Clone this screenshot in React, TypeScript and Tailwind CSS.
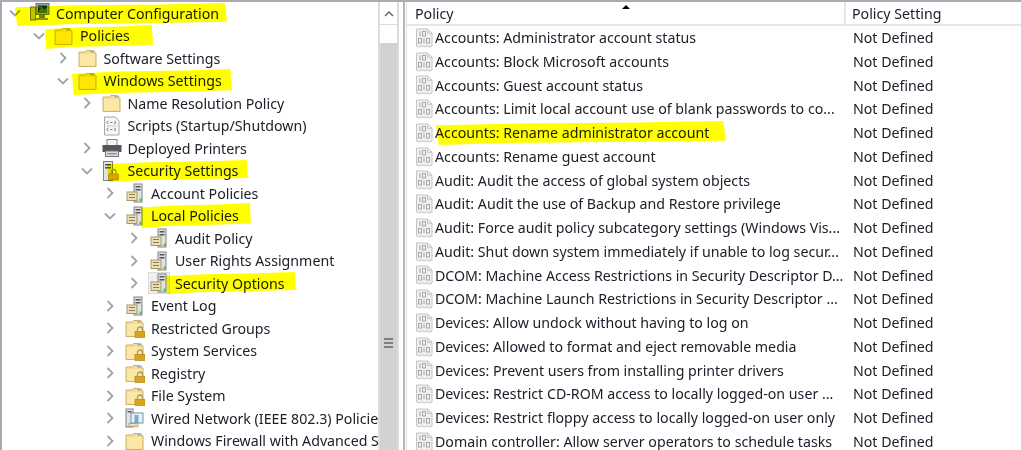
import React from 'react';

type IconName = 'computer' | 'folder' | 'script' | 'printer' | 'secure' | 'server' | 'lockfolder' | 'network';

const Chevron = ({ open }: { open: boolean }) => (
  <svg width="16" height="16" viewBox="0 0 16 16" fill="none" stroke="#a3a3a3" strokeWidth="1.8" className="shrink-0">
    {open ? <polyline points="3,5.5 8,10.5 13,5.5" /> : <polyline points="5.5,3 10.5,8 5.5,13" />}
  </svg>
);

const Lock = ({ x, y }: { x: number; y: number }) => (
  <g transform={`translate(${x} ${y})`}>
    <path d="M2.5 5V3a2.5 2.5 0 0 1 5 0V5" fill="none" stroke="#a89a6a" strokeWidth="1.3" />
    <rect x="0" y="5" width="10" height="6" fill="#d9a520" stroke="#a67c10" strokeWidth="0.6" />
  </g>
);

const Folder = () => (
  <>
    <path d="M1 4h6.5l1-1.5h6l2 .5v2H18v13.5H1z" fill="#f8dc94" stroke="#cfb06c" strokeWidth="1" />
    <rect x="2" y="6" width="15" height="11.5" fill="#fde7a6" />
    <rect x="12.5" y="3" width="3" height="1.6" fill="#7fb2dc" />
  </>
);

const Server = () => (
  <>
    <rect x="9" y="1" width="8" height="18" fill="#dfe3e6" stroke="#7d8388" strokeWidth="1" />
    <rect x="10.5" y="3" width="5" height="1.5" fill="#555" />
    <rect x="10.5" y="6" width="5" height="1.5" fill="#555" />
    <rect x="2" y="9" width="10" height="8.5" fill="#e9dfb8" stroke="#a89a68" strokeWidth="1" />
    <path d="M4 11.5h6M4 14.5h6" stroke="#8a7d50" strokeWidth="1" />
    <rect x="14.5" y="15.5" width="2.5" height="2.5" fill="#5cc24a" />
  </>
);

const TreeIcon = ({ name }: { name: IconName }) => (
  <svg width="20" height="20" viewBox="0 0 20 20" className="shrink-0">
    {name === 'computer' && (
      <>
        <rect x="6" y="0.5" width="13" height="11" fill="#9aa4aa" stroke="#6e767b" strokeWidth="1" />
        <rect x="8" y="2.5" width="9" height="7" fill="#1c2a22" />
        <path d="M8 9.5l4-6 2 3 3-2v5z" fill="#2f7d3a" />
        <rect x="8.5" y="2.5" width="3" height="3" fill="#2b5fb0" />
        <rect x="0.5" y="4" width="5" height="13" fill="#bfc4a0" stroke="#6e767b" strokeWidth="1" />
        <rect x="9" y="12" width="6" height="3" fill="#7a8186" />
        <rect x="6" y="15" width="12" height="2" fill="#8d9498" />
      </>
    )}
    {name === 'folder' && <Folder />}
    {name === 'script' && (
      <>
        <path d="M2.5 1h11l3.5 4v14H2.5z" fill="#f7f7f7" stroke="#a6a6a6" strokeWidth="1" />
        <path d="M6.5 5l-2 1.5 2 1.5M12 5l2 1.5-2 1.5M8 6.5h2.5M6.5 12l-2 1.5 2 1.5M12 12l2 1.5-2 1.5M8 13.5h2.5" fill="none" stroke="#777" strokeWidth="0.9" />
        <path d="M4.5 10h10" stroke="#c4c4c4" strokeWidth="1" />
      </>
    )}
    {name === 'printer' && (
      <>
        <rect x="5" y="1.5" width="10" height="6" fill="#f4f4f4" stroke="#888" strokeWidth="1" />
        <rect x="0.5" y="7" width="19" height="7" fill="#53575b" />
        <rect x="3.5" y="13" width="13" height="5.5" fill="#dcdcdc" stroke="#777" strokeWidth="1" />
        <rect x="5.5" y="15" width="9" height="1.5" fill="#6aa0c8" />
      </>
    )}
    {name === 'secure' && (
      <>
        <rect x="1.5" y="0.5" width="9" height="19" fill="#dfe3e6" stroke="#7d8388" strokeWidth="1" />
        <rect x="3" y="3" width="6" height="1.5" fill="#555" />
        <rect x="3" y="6" width="6" height="1.5" fill="#555" />
        <Lock x={6.5} y={8} />
      </>
    )}
    {name === 'server' && <Server />}
    {name === 'lockfolder' && (
      <>
        <Folder />
        <Lock x={10} y={8.5} />
      </>
    )}
    {name === 'network' && (
      <>
        <rect x="1" y="1" width="7" height="18" fill="#dfe3e6" stroke="#7d8388" strokeWidth="1" />
        <rect x="2.5" y="3" width="4" height="1.5" fill="#555" />
        <rect x="6" y="5" width="12" height="10" fill="#e8f1f8" stroke="#6f93b3" strokeWidth="1" />
        <rect x="9.5" y="7" width="4" height="8" fill="#7fa9cc" />
        <rect x="4" y="15.5" width="9" height="3" fill="#e9dfb8" stroke="#a89a68" strokeWidth="0.8" />
      </>
    )}
  </svg>
);

const PolicyIcon = () => (
  <svg width="19" height="20" viewBox="0 0 19 20" className="shrink-0">
    <path d="M1.5 1h11l4.500 4v13l-2.500 1-2.500-1-2.500 1-2.500-1-2.500 1-3-1z" fill="#f0f0f0" stroke="#c4c4c4" strokeWidth="1" />
    <path d="M12.500 1v4.500h4.500" fill="#e2e2e2" stroke="#c4c4c4" strokeWidth="0.8" />
    <path d="M5 3.500v4.500" stroke="#a8a8a8" strokeWidth="1.100" />
    <rect x="7.500" y="3.500" width="3" height="4.500" fill="none" stroke="#a8a8a8" strokeWidth="1" />
    <rect x="3.500" y="10.500" width="3" height="4.500" fill="none" stroke="#a8a8a8" strokeWidth="1" />
    <path d="M9 10.500V15" stroke="#a8a8a8" strokeWidth="1.100" />
    <rect x="11.500" y="10.500" width="3" height="4.500" fill="none" stroke="#a8a8a8" strokeWidth="1" />
  </svg>
);

// freehand marker stroke, sits on top of the row and multiplies with the text
const Marker = ({ className }: { className: string }) => (
  <svg viewBox="0 0 100 100" preserveAspectRatio="none" className={`absolute mix-blend-multiply pointer-events-none ${className}`}>
    <path d="M0 18 L30 10 L70 6 L99 0 L100 82 L60 88 L25 92 L1 100 Z" fill="#ffff00" />
  </svg>
);

const levels = ['pl-[7px]', 'pl-[31px]', 'pl-[54.5px]', 'pl-[78.5px]', 'pl-[102px]', 'pl-[126px]'];

const tree: { label: string; level: number; icon: IconName; open?: boolean; leaf?: boolean; selected?: boolean; marker?: string }[] = [
  { label: 'Computer Configuration', level: 0, icon: 'computer', open: true, marker: 'left-[15px] w-[212px] top-[1px] h-[23px]' },
  { label: 'Policies', level: 1, icon: 'folder', open: true, marker: 'left-[45px] w-[108px] top-0 h-[24px]' },
  { label: 'Software Settings', level: 2, icon: 'folder' },
  { label: 'Windows Settings', level: 2, icon: 'folder', open: true, marker: 'left-[72px] w-[160px] -top-[1px] h-[26px]' },
  { label: 'Name Resolution Policy', level: 3, icon: 'folder' },
  { label: 'Scripts (Startup/Shutdown)', level: 3, icon: 'script', leaf: true },
  { label: 'Deployed Printers', level: 3, icon: 'printer' },
  { label: 'Security Settings', level: 3, icon: 'secure', open: true, marker: 'left-[107px] w-[141px] top-0 h-[22px]' },
  { label: 'Account Policies', level: 4, icon: 'server' },
  { label: 'Local Policies', level: 4, icon: 'server', open: true, marker: 'left-[141px] w-[110px] -top-[2px] h-[25px]' },
  { label: 'Audit Policy', level: 5, icon: 'server' },
  { label: 'User Rights Assignment', level: 5, icon: 'server' },
  { label: 'Security Options', level: 5, icon: 'server', selected: true, marker: 'left-[166px] w-[130px] top-0 h-[22px]' },
  { label: 'Event Log', level: 4, icon: 'server' },
  { label: 'Restricted Groups', level: 4, icon: 'lockfolder' },
  { label: 'System Services', level: 4, icon: 'lockfolder' },
  { label: 'Registry', level: 4, icon: 'lockfolder' },
  { label: 'File System', level: 4, icon: 'lockfolder' },
  { label: 'Wired Network (IEEE 802.3) Policies', level: 4, icon: 'network' },
  { label: 'Windows Firewall with Advanced Security', level: 4, icon: 'folder' },
];

const policies = [
  'Accounts: Administrator account status',
  'Accounts: Block Microsoft accounts',
  'Accounts: Guest account status',
  'Accounts: Limit local account use of blank passwords to co...',
  'Accounts: Rename administrator account',
  'Accounts: Rename guest account',
  'Audit: Audit the access of global system objects',
  'Audit: Audit the use of Backup and Restore privilege',
  'Audit: Force audit policy subcategory settings (Windows Vis...',
  'Audit: Shut down system immediately if unable to log secur...',
  'DCOM: Machine Access Restrictions in Security Descriptor D...',
  'DCOM: Machine Launch Restrictions in Security Descriptor ...',
  'Devices: Allow undock without having to log on',
  'Devices: Allowed to format and eject removable media',
  'Devices: Prevent users from installing printer drivers',
  'Devices: Restrict CD-ROM access to locally logged-on user ...',
  'Devices: Restrict floppy access to locally logged-on user only',
  'Domain controller: Allow server operators to schedule tasks',
];

export default function App() {
  return (
    <div className="relative w-[1021px] h-[450px] overflow-hidden bg-white flex flex-col font-['Noto_Sans',sans-serif] text-[14.2px] text-[#20202c]">
      <div className="h-[2px] bg-[#a9aab3] shrink-0" />
      <div className="flex flex-1 min-h-0">
        {/* Tree */}
        <div className="w-[378px] shrink-0 border-l-2 border-[#a9aab3] overflow-hidden">
          <div className="-ml-[2px]">
            {tree.map((n) => (
              <div key={n.label} className={`relative flex items-center h-[22.5px] whitespace-nowrap ${levels[n.level]}`}>
                {n.leaf ? <div className="w-4 shrink-0" /> : <Chevron open={!!n.open} />}
                <div className={`ml-[7px] w-[20px] shrink-0 flex ${n.selected ? 'outline outline-[#dcdcdc] bg-[#efefef]' : ''}`}>
                  <TreeIcon name={n.icon} />
                </div>
                <span className="ml-[6px]">{n.label}</span>
                {n.marker && <Marker className={n.marker} />}
              </div>
            ))}
          </div>
        </div>

        {/* Tree scrollbar */}
        <div className="w-[21px] shrink-0 flex flex-col border-x-2 border-[#dcdcdc]">
          <div className="h-[22px] flex items-center justify-center mt-[1px] border-b border-[#dcdcdc]">
            <svg width="10" height="6" viewBox="0 0 10 6" fill="none" stroke="#606060" strokeWidth="1.4">
              <polyline points="1,5 5,1 9,5" />
            </svg>
          </div>
          <div className="h-[18px] bg-white" />
          <div className="flex-1 bg-[#d2d2d2] flex flex-col items-center pt-[295px] gap-[2px]">
            <div className="w-[9px] h-[2px] bg-[#7f7f7f]" />
            <div className="w-[9px] h-[2px] bg-[#7f7f7f]" />
            <div className="w-[9px] h-[2px] bg-[#7f7f7f]" />
          </div>
        </div>

        {/* Splitter */}
        <div className="w-[7px] shrink-0 flex">
          <div className="w-[4px] bg-white" />
          <div className="w-[2px] bg-[#b5b5bb]" />
        </div>

        {/* Policy list */}
        <div className="flex-1 min-w-0 border-l border-[#e0e0e0]">
          <div className="relative flex h-[24px] border-b-2 border-[#e6e6e6]">
            <div className="w-[439px] pl-[8px] pt-[2px] flex items-center border-r-2 border-[#e6e6e6]">Policy</div>
            <div className="pl-[6px] pt-[2px] flex items-center">Policy Setting</div>
            <div className="absolute left-[215px] top-[3px] w-0 h-0 border-x-[4px] border-x-transparent border-b-[4px] border-b-black" />
          </div>
          {policies.map((p) => (
            <div key={p} className="relative flex items-center h-[23.75px] whitespace-nowrap">
              <div className="w-[441px] pl-[8px] flex items-center">
                <PolicyIcon />
                <span className="ml-[1px]">{p}</span>
              </div>
              <span className="pl-[5px]">Not Defined</span>
              {p === 'Accounts: Rename administrator account' && <Marker className="left-[29px] w-[290px] top-0 h-[24px]" />}
            </div>
          ))}
        </div>
      </div>
    </div>
  );
}
